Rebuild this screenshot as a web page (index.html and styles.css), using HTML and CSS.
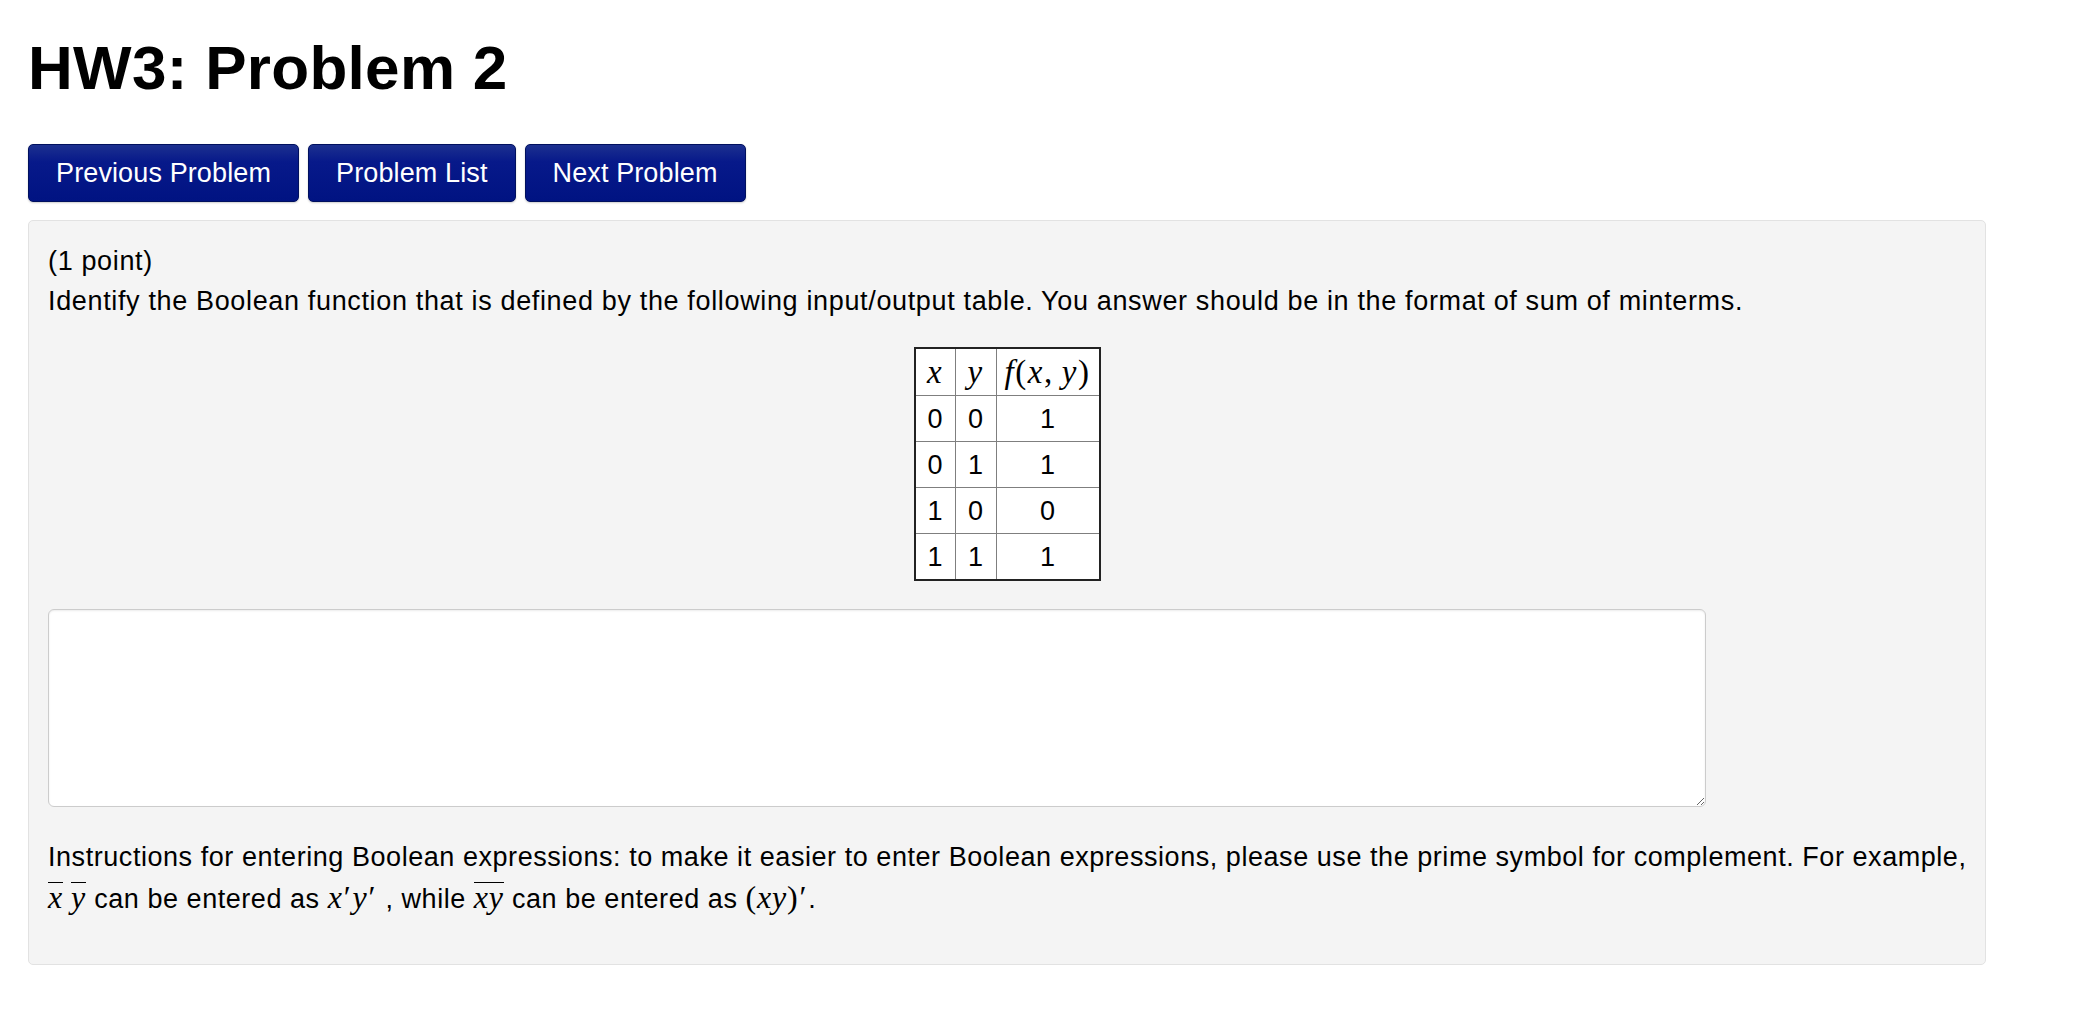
FILE: index.html
```html
<!DOCTYPE html>
<html lang="en">
<head>
<meta charset="utf-8">
<title>HW3: Problem 2</title>
<link rel="stylesheet" href="styles.css">
</head>
<body>
<div class="page">
  <h1 class="title">HW3: Problem 2</h1>
  <div class="nav">
    <a class="btn" href="#">Previous Problem</a>
    <a class="btn" href="#">Problem List</a>
    <a class="btn" href="#">Next Problem</a>
  </div>
  <div class="panel">
    <p class="intro">(1 point)<br>Identify the Boolean function that is defined by the following input/output table. You answer should be in the format of sum of minterms.</p>
    <table class="truth">
      <tr>
        <th class="c1"><i>x</i></th>
        <th class="c2"><i>y</i></th>
        <th class="c3"><i>f</i>(<i>x</i>,&#8201;<i>y</i>)</th>
      </tr>
      <tr><td>0</td><td>0</td><td>1</td></tr>
      <tr><td>0</td><td>1</td><td>1</td></tr>
      <tr><td>1</td><td>0</td><td>0</td></tr>
      <tr><td>1</td><td>1</td><td>1</td></tr>
    </table>
    <textarea class="answer" aria-label="answer"></textarea>
    <p class="instructions"><span class="nowrap">Instructions for entering Boolean expressions: to make it easier to enter Boolean expressions, please use the prime symbol for complement. For example,</span><br><span class="m"><span class="ov"><i>x</i></span></span> <span class="m"><span class="ov"><i>y</i></span></span> can be entered as <span class="m"><i>x</i><span class="pr">&#8242;</span><i>y</i><span class="pr">&#8242;</span></span> , while <span class="m"><span class="ov"><i>xy</i></span></span> can be entered as <span class="m">(<i>xy</i>)<span class="pr">&#8242;</span></span>.</p>
  </div>
</div>
</body>
</html>
```
FILE: styles.css
```css
html, body {
  margin: 0;
  padding: 0;
  background: #ffffff;
}

body {
  font-family: "Liberation Sans", Arial, Helvetica, sans-serif;
  color: #000;
}

.page {
  padding-left: 28px;
  width: 1958px;
}

.title {
  margin: 32px 0 0 0;
  font-size: 62px;
  line-height: 72px;
  font-weight: bold;
  letter-spacing: 0.3px;
}

.nav {
  display: flex;
  gap: 9px;
  margin-top: 40px;
}

.btn {
  display: block;
  box-sizing: border-box;
  height: 58px;
  padding: 13px 27px 0 27px;
  font-size: 27px;
  line-height: 30px;
  letter-spacing: 0.12px;
  color: #ffffff;
  text-decoration: none;
  border: 1px solid #00105e;
  border-radius: 5px;
  background: linear-gradient(#1c308f 0%, #07198a 30%, #001382 100%);
  box-shadow: 0 1px 2px rgba(0, 0, 0, 0.2);
}

.panel {
  box-sizing: border-box;
  margin-top: 18px;
  width: 1958px;
  padding: 20px 19px 20px 19px;
  background: #f4f4f4;
  border: 1px solid #e2e2e2;
  border-radius: 5px;
  font-size: 27px;
  line-height: 40px;
  letter-spacing: 0.65px;
}

.intro {
  margin: 0;
}

.truth {
  margin: 26px auto 0 auto;
  border-collapse: collapse;
  border: 2px solid #222;
  background: #ffffff;
  letter-spacing: 0;
}

.truth th,
.truth td {
  border: 1px solid #7f7f7f;
  padding: 0;
  text-align: center;
  font-weight: normal;
  height: 45px;
  line-height: 40px;
}

.truth th {
  height: 46px;
  font-family: "Liberation Serif", "Times New Roman", serif;
  font-size: 33px;
  letter-spacing: 1.5px;
}

.truth th.c1 { width: 39px; }
.truth th.c2 { width: 40px; }
.truth th.c3 { width: 102px; }

.answer {
  display: block;
  box-sizing: border-box;
  margin-top: 28px;
  width: 1658px;
  height: 198px;
  background: #ffffff;
  border: 1.5px solid #cccccc;
  border-radius: 6px;
  box-shadow: inset 0 1px 2px rgba(0, 0, 0, 0.08);
  font-family: "Liberation Sans", Arial, sans-serif;
  font-size: 26px;
  padding: 6px 8px;
}

.instructions {
  margin: 30px 0 25px 0;
  letter-spacing: 0.55px;
}

.nowrap {
  white-space: nowrap;
}

.m {
  font-family: "Liberation Serif", "Times New Roman", "DejaVu Serif", serif;
  font-size: 32px;
  letter-spacing: 0.8px;
}

.pr {
  margin-left: 1px;
  margin-right: 1px;
}

.ov {
  display: inline-block;
  line-height: 28px;
  border-top: 1.5px solid #000;
}
```
